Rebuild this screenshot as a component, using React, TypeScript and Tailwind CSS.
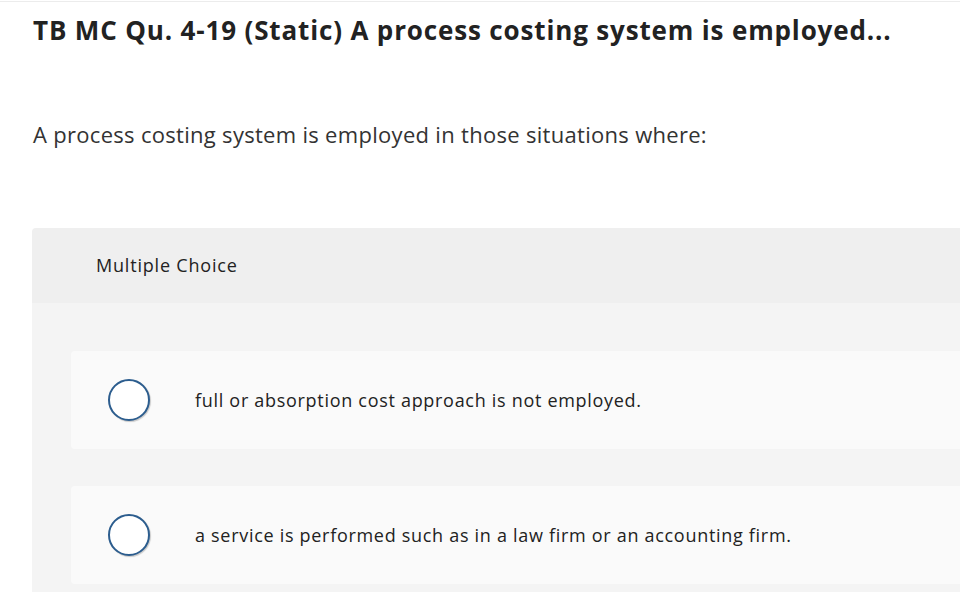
import React from "react";

function Radio() {
  return (
    <div className="w-[42px] h-[42px] rounded-full border-2 border-[#2c5d8e] bg-white shadow-[1px_1px_1px_rgba(0,0,0,0.2)] shrink-0" />
  );
}

function Option({ text }: { text: string }) {
  return (
    <div className="flex items-center h-[98px] bg-[#fafafa] rounded-[4px] pl-[37px]">
      <Radio />
      <span className="ml-[45px] text-[18px] tracking-[0.7px] text-[#222]">{text}</span>
    </div>
  );
}

export default function App() {
  return (
    <div
      className="w-[960px] h-[592px] overflow-hidden bg-white"
      style={{ fontFamily: "'Open Sans', sans-serif" }}
    >
      <div className="mt-px border-t border-[#ececec]" />
      <h1 className="pl-[33px] pt-[10px] text-[26px] font-bold tracking-[0.85px] text-[#222] leading-[36px]">
        TB MC Qu. 4-19 (Static) A process costing system is employed...
      </h1>
      <p className="pl-[33px] mt-[70px] text-[22px] tracking-[0.3px] text-[#333] leading-[32px]">
        A process costing system is employed in those situations where:
      </p>
      <div className="ml-[32px] mr-[-40px] mt-[78px] rounded-tl-[4px] overflow-hidden">
        <div className="h-[75px] bg-[#efefef] flex items-center pl-[64px]">
          <span className="text-[18px] tracking-[0.8px] text-[#222]">Multiple Choice</span>
        </div>
        <div className="bg-[#f4f4f4] pl-[39px] pt-[48px] pb-[40px] flex flex-col gap-[37px]">
          <Option text="full or absorption cost approach is not employed." />
          <Option text="a service is performed such as in a law firm or an accounting firm." />
        </div>
      </div>
    </div>
  );
}
